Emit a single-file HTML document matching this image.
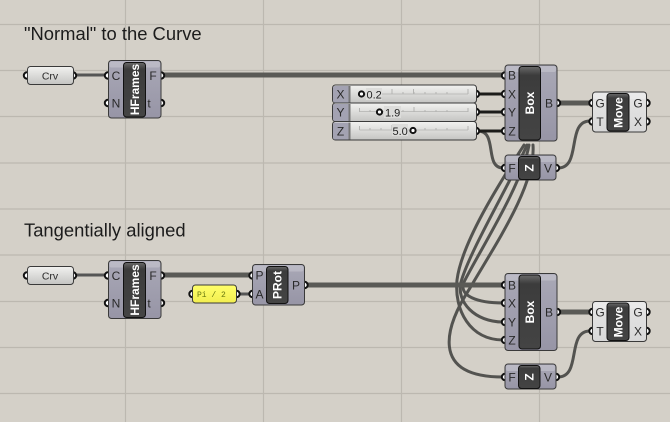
<!DOCTYPE html>
<html><head><meta charset="utf-8"><style>
html,body{margin:0;padding:0;background:#d4d0c8;width:670px;height:422px;overflow:hidden}
svg{display:block}
text{font-family:"Liberation Sans",sans-serif}
.g{stroke:#bcb8b0;stroke-width:1.2;fill:none}
.w{fill:none;stroke:#535350;stroke-width:3;stroke-linecap:round}
.th{fill:none;stroke:#5a5a56;stroke-width:5}
.d{fill:none;stroke:#1c1c1a;stroke-width:3}
.p{fill:#fff;stroke:#111;stroke-width:2}
.b{fill:url(#gb);stroke:#3a3a3a;stroke-width:1}
.wb{fill:url(#gw);stroke:#3a3a3a;stroke-width:1}
.hl{fill:#fff;opacity:.22}
.i{fill:url(#gi);stroke:#111;stroke-width:1}
.l{font-size:12px;fill:#2a2a2a;text-anchor:middle}
.n{font-size:12px;font-weight:bold;fill:#fff;text-anchor:middle}
</style></head><body>
<svg width="670" height="422" viewBox="0 0 670 422" xmlns="http://www.w3.org/2000/svg">
<defs>
<linearGradient id="gb" x1="0" y1="0" x2="0" y2="1"><stop offset="0" stop-color="#a9a8b6"/><stop offset="1" stop-color="#9795a6"/></linearGradient>
<linearGradient id="gw" x1="0" y1="0" x2="0" y2="1"><stop offset="0" stop-color="#e6e6e6"/><stop offset="1" stop-color="#d8d8d8"/></linearGradient>
<linearGradient id="gi" x1="0" y1="0" x2="0" y2="1"><stop offset="0" stop-color="#6a6a6a"/><stop offset=".12" stop-color="#3c3c3c"/><stop offset="1" stop-color="#444"/></linearGradient>
<linearGradient id="gc" x1="0" y1="0" x2="0" y2="1"><stop offset="0" stop-color="#f2f2f0"/><stop offset="1" stop-color="#c4c4c2"/></linearGradient>
<linearGradient id="gy" x1="0" y1="0" x2="0" y2="1"><stop offset="0" stop-color="#ffff6a"/><stop offset="1" stop-color="#f2ee50"/></linearGradient>
</defs>
<rect width="670" height="422" fill="#d4d0c8"/>
<!-- grid -->
<path class="g" d="M0 24.5H670M0 70.5H670M0 116.5H670M0 163H670M0 209H670M0 255H670M0 301.5H670M0 347.5H670M0 393.5H670M125.5 0V422M263.5 0V422M401.5 0V422M539.5 0V422"/>
<text x="24" y="40" font-size="18.4" fill="#1c1c1c">"Normal" to the Curve</text>
<text x="24" y="236.5" font-size="18.4" fill="#1c1c1c">Tangentially aligned</text>

<!-- wires -->
<path class="w" d="M524 145C505 175 462 240 457 280C454 310 470 340 503 340"/>
<path class="w" d="M527 145C512 180 470 250 461 282C456 302 475 322 503 322"/>
<path class="w" d="M529 145C522 185 480 250 464 282C458 296 478 303 503 303"/>
<path class="w" d="M533 145C536 185 495 245 470 288C446 325 428 377 503 377"/>
<path class="w" d="M478 131C498 131 484 168 503 168"/>
<path class="w" d="M558 168C582 168 566 121 590 121"/>
<path class="w" d="M558 377C582 377 566 331 590 331"/>
<path class="d" d="M478 94H503M478 112H503M478 131H503"/>
<path class="th" d="M163 75H503M163 275H250M306 285H503M559 103H590M559 312H590"/>
<path style="fill:none;stroke:#555;stroke-width:3" d="M77 75H105M77 275H105M238 294H250"/>

<!-- Crv 1 -->
<circle class="p" cx="27" cy="75.5" r="3.2"/><circle class="p" cx="73" cy="75.5" r="3.2"/>
<rect x="27.5" y="66.5" width="46" height="18" rx="3" fill="url(#gc)" stroke="#3a3a3a"/>
<text class="l" x="50" y="79.5" style="font-size:10.5px">Crv</text>
<!-- Crv 2 -->
<circle class="p" cx="27" cy="275.5" r="3.2"/><circle class="p" cx="73" cy="275.5" r="3.2"/>
<rect x="27.5" y="266.5" width="46" height="18" rx="3" fill="url(#gc)" stroke="#3a3a3a"/>
<text class="l" x="50" y="279.5" style="font-size:10.5px">Crv</text>

<!-- HFrames 1 -->
<g>
<circle class="p" cx="108" cy="75.5" r="3.2"/><circle class="p" cx="108" cy="103" r="3.2"/><circle class="p" cx="161" cy="75.5" r="3.2"/><circle class="p" cx="161" cy="103" r="3.2"/>
<rect class="b" x="108.5" y="60.5" width="52.5" height="57.5" rx="3"/><rect class="hl" x="109.5" y="61.5" width="50.5" height="6" rx="2"/>
<rect class="i" x="123.5" y="62.5" width="22" height="54.5" rx="3"/>
<text class="l" x="116" y="80">C</text><text class="l" x="116" y="107.5">N</text><text class="l" x="153" y="80">F</text><text class="l" x="149" y="107.5">t</text>
<text class="n" transform="translate(139,89.5) rotate(-90)">HFrames</text>
</g>
<!-- HFrames 2 -->
<g>
<circle class="p" cx="108" cy="275.5" r="3.2"/><circle class="p" cx="108" cy="303" r="3.2"/><circle class="p" cx="161" cy="275.5" r="3.2"/><circle class="p" cx="161" cy="303" r="3.2"/>
<rect class="b" x="108.5" y="260.5" width="52.5" height="58" rx="3"/><rect class="hl" x="109.5" y="261.5" width="50.5" height="6" rx="2"/>
<rect class="i" x="123.5" y="262.5" width="22" height="55" rx="3"/>
<text class="l" x="116" y="280">C</text><text class="l" x="116" y="307.5">N</text><text class="l" x="153" y="280">F</text><text class="l" x="149" y="307.5">t</text>
<text class="n" transform="translate(139,290) rotate(-90)">HFrames</text>
</g>
<!-- Yellow -->
<circle class="p" cx="192.5" cy="294" r="3.2"/><circle class="p" cx="236.5" cy="294" r="3.2"/>
<rect x="192.5" y="285" width="44" height="18" rx="3" fill="url(#gy)" stroke="#3a3a3a"/>
<text x="197" y="297" font-size="8" fill="#6a7a10" style="font-family:'Liberation Mono',monospace">Pi / 2</text>
<!-- PRot -->
<g>
<circle class="p" cx="252.5" cy="275.5" r="3.2"/><circle class="p" cx="252.5" cy="294" r="3.2"/><circle class="p" cx="304.5" cy="285" r="3.2"/>
<rect class="b" x="252.5" y="264.5" width="52" height="40.5" rx="3"/><rect class="hl" x="253.5" y="265.5" width="50" height="6" rx="2"/>
<rect class="i" x="266.5" y="266.5" width="21.5" height="37" rx="3"/>
<text class="l" x="259.5" y="279.5">P</text><text class="l" x="259.5" y="298.5">A</text><text class="l" x="296" y="289.5">P</text>
<text class="n" transform="translate(281.5,285) rotate(-90)">PRot</text>
</g>

<!-- Sliders -->
<g>
<circle class="p" cx="476" cy="94" r="3.2"/><circle class="p" cx="476" cy="112" r="3.2"/><circle class="p" cx="476" cy="131" r="3.2"/>
<rect x="332.5" y="85" width="144" height="18" rx="3" fill="url(#gc)" stroke="#3a3a3a"/>
<rect x="332.5" y="103" width="144" height="18.5" rx="3" fill="url(#gc)" stroke="#3a3a3a"/>
<rect x="332.5" y="121.5" width="144" height="18.5" rx="3" fill="url(#gc)" stroke="#3a3a3a"/>
<path d="M349.5 86V102.5M349.5 104V121M349.5 122.5V139.5" stroke="#777" stroke-width="2"/>
<path d="M333 88a2 2 0 0 1 2-2H348.5V102.5H335a2 2 0 0 1-2-2ZM333 106a2 2 0 0 1 2-2H348.5V121H335a2 2 0 0 1-2-2ZM333 124.5a2 2 0 0 1 2-2H348.5V139.5H335a2 2 0 0 1-2-2Z" fill="#a3a2b2"/>
<text class="l" x="340.5" y="98.5">X</text><text class="l" x="340.5" y="116.5">Y</text><text class="l" x="340.5" y="135.5">Z</text>
<path d="M359.5 94H468M359.5 111.5H468M359.5 130H468" stroke="#bdbdbb" stroke-width="1"/>
<path d="M359.5 91V94M370 92V94M381 92V94M392 89V94M403 92V94M414 92V94M425 92V94M436 92V94M447 92V94M468 89V94M413.5 89V94M359.5 108V112M370 110V112M381 110V112M392 107V112M403 110V112M414 107V112M425 110V112M436 110V112M447 110V112M468 108V112M359.5 126V130M370 128V130M381 128V130M392 125V130M403 128V130M425 128V130M436 128V130M447 128V130M468 126V130" stroke="#b4b4b2" stroke-width="1" fill="none"/>
<rect x="366" y="88" width="16" height="12" fill="#dcdcda"/><rect x="384" y="106" width="17" height="12" fill="#dcdcda"/><rect x="392" y="124" width="16" height="12" fill="#dcdcda"/>
<circle cx="361.5" cy="94" r="2.6" fill="#fff" stroke="#111" stroke-width="2"/>
<circle cx="379.5" cy="112" r="2.6" fill="#fff" stroke="#111" stroke-width="2"/>
<circle cx="413" cy="130.5" r="2.6" fill="#fff" stroke="#111" stroke-width="2"/>
<text x="366.5" y="98.5" font-size="11" fill="#222">0.2</text>
<text x="385" y="116.5" font-size="11" fill="#222">1.9</text>
<text x="392.5" y="135" font-size="11" fill="#222">5.0</text>
</g>

<!-- Box 1 -->
<g>
<circle class="p" cx="505" cy="75.5" r="3.2"/><circle class="p" cx="505" cy="94" r="3.2"/><circle class="p" cx="505" cy="112" r="3.2"/><circle class="p" cx="505" cy="131" r="3.2"/><circle class="p" cx="557" cy="103" r="3.2"/>
<rect class="b" x="505" y="65" width="52" height="76" rx="3"/><rect class="hl" x="506" y="66" width="50" height="6" rx="2"/>
<rect class="i" x="519" y="66.5" width="21.5" height="73.5" rx="3"/>
<text class="l" x="512" y="79.5">B</text><text class="l" x="512" y="98.5">X</text><text class="l" x="512" y="116.5">Y</text><text class="l" x="512" y="135.5">Z</text><text class="l" x="549" y="107.5">B</text>
<text class="n" transform="translate(534,103) rotate(-90)">Box</text>
</g>
<!-- Z 1 -->
<g>
<circle class="p" cx="505" cy="168" r="3.2"/><circle class="p" cx="556" cy="168" r="3.2"/>
<rect class="b" x="505" y="155" width="51" height="25" rx="3"/><rect class="hl" x="506" y="156" width="49" height="6" rx="2"/>
<rect class="i" x="518.5" y="156.5" width="21.5" height="23" rx="3"/>
<text class="l" x="512" y="172.5">F</text><text class="l" x="548" y="172.5">V</text>
<text class="n" transform="translate(533.5,168) rotate(-90)">Z</text>
</g>
<!-- Move 1 -->
<g>
<circle class="p" cx="592.5" cy="103" r="3.2"/><circle class="p" cx="592.5" cy="121.5" r="3.2"/><circle class="p" cx="646.5" cy="103" r="3.2"/><circle class="p" cx="646.5" cy="121.5" r="3.2"/>
<rect class="wb" x="592.5" y="92" width="54" height="40" rx="3"/><rect class="hl" x="593.5" y="93" width="52" height="6" rx="2"/>
<rect class="i" x="607" y="93.5" width="22" height="37.5" rx="3"/>
<text class="l" x="600" y="107.5">G</text><text class="l" x="600" y="126">T</text><text class="l" x="638" y="107.5">G</text><text class="l" x="638" y="126">X</text>
<text class="n" transform="translate(622.5,112.5) rotate(-90)">Move</text>
</g>

<!-- Box 2 -->
<g>
<circle class="p" cx="505" cy="285" r="3.2"/><circle class="p" cx="505" cy="303" r="3.2"/><circle class="p" cx="505" cy="322" r="3.2"/><circle class="p" cx="505" cy="340" r="3.2"/><circle class="p" cx="557" cy="312" r="3.2"/>
<rect class="b" x="505" y="273.5" width="52" height="77" rx="3"/><rect class="hl" x="506" y="274.5" width="50" height="6" rx="2"/>
<rect class="i" x="519" y="275" width="21.5" height="74" rx="3"/>
<text class="l" x="512" y="289.5">B</text><text class="l" x="512" y="307.5">X</text><text class="l" x="512" y="326.5">Y</text><text class="l" x="512" y="344.5">Z</text><text class="l" x="549" y="316.5">B</text>
<text class="n" transform="translate(534,312) rotate(-90)">Box</text>
</g>
<!-- Z 2 -->
<g>
<circle class="p" cx="505" cy="377" r="3.2"/><circle class="p" cx="556" cy="377" r="3.2"/>
<rect class="b" x="505" y="364" width="51" height="25" rx="3"/><rect class="hl" x="506" y="365" width="49" height="6" rx="2"/>
<rect class="i" x="518.5" y="365.5" width="21.5" height="23" rx="3"/>
<text class="l" x="512" y="381.5">F</text><text class="l" x="548" y="381.5">V</text>
<text class="n" transform="translate(533.5,377) rotate(-90)">Z</text>
</g>
<!-- Move 2 -->
<g>
<circle class="p" cx="592.5" cy="312" r="3.2"/><circle class="p" cx="592.5" cy="331" r="3.2"/><circle class="p" cx="646.5" cy="312" r="3.2"/><circle class="p" cx="646.5" cy="331" r="3.2"/>
<rect class="wb" x="592.5" y="301.5" width="54" height="40" rx="3"/><rect class="hl" x="593.5" y="302.5" width="52" height="6" rx="2"/>
<rect class="i" x="607" y="303" width="22" height="37.5" rx="3"/>
<text class="l" x="600" y="316.5">G</text><text class="l" x="600" y="335.5">T</text><text class="l" x="638" y="316.5">G</text><text class="l" x="638" y="335.5">X</text>
<text class="n" transform="translate(622.5,322) rotate(-90)">Move</text>
</g>
</svg>
</body></html>
